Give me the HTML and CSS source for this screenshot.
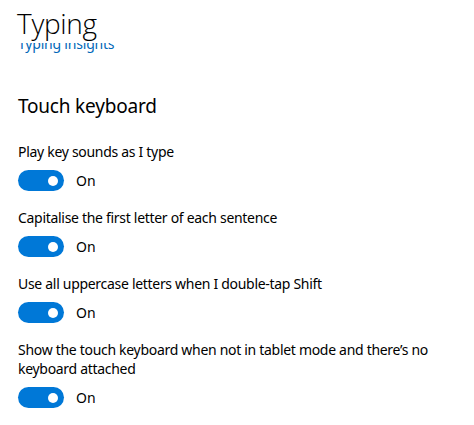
FILE: index.html
```html
<!DOCTYPE html>
<html lang="en">
<head>
<meta charset="utf-8">
<title>Typing</title>
<link rel="stylesheet" href="styles.css">
</head>
<body>
<header class="page-header">
  <h1 class="page-title">Typing</h1>
</header>
<main class="scroller">
  <a class="link" href="#">Typing insights</a>
  <h2 class="section-title">Touch keyboard</h2>
  <div class="setting">
    <div class="label">Play key sounds as I type</div>
    <div class="toggle-row"><span class="toggle"><span class="knob"></span></span><span class="state">On</span></div>
  </div>
  <div class="setting">
    <div class="label">Capitalise the first letter of each sentence</div>
    <div class="toggle-row"><span class="toggle"><span class="knob"></span></span><span class="state">On</span></div>
  </div>
  <div class="setting">
    <div class="label">Use all uppercase letters when I double-tap Shift</div>
    <div class="toggle-row"><span class="toggle"><span class="knob"></span></span><span class="state">On</span></div>
  </div>
  <div class="setting">
    <div class="label">Show the touch keyboard when not in tablet mode and there’s no keyboard attached</div>
    <div class="toggle-row"><span class="toggle"><span class="knob"></span></span><span class="state">On</span></div>
  </div>
</main>
</body>
</html>
```

FILE: styles.css
```css
html, body {
  margin: 0;
  padding: 0;
  background: #ffffff;
}
body {
  width: 474px;
  height: 425px;
  overflow: hidden;
  font-family: "Noto Sans", "Open Sans", sans-serif;
  color: #000000;
}
.page-header {
  height: 43px;
  padding-left: 17px;
  box-sizing: border-box;
}
.page-title {
  margin: 0;
  padding-top: 5px;
  font-family: "Open Sans", "Noto Sans", sans-serif;
  font-size: 28px;
  line-height: 36px;
  font-weight: 300;
  letter-spacing: -0.3px;
}
.scroller {
  height: 382px;
  overflow: hidden;
  padding-left: 18px;
  padding-right: 18px;
  display: flex;
  flex-direction: column;
  align-items: flex-start;
}
.link {
  margin-top: -9px;
  font-size: 14px;
  line-height: 20px;
  letter-spacing: -0.2px;
  color: #0067b8;
  text-decoration: none;
}
.section-title {
  margin: 38px 0 0 0;
  font-size: 19px;
  line-height: 28px;
  font-weight: 400;
  letter-spacing: -0.2px;
}
.setting {
  display: flex;
  flex-direction: column;
  align-items: flex-start;
  margin-top: 22px;
}
.setting + .setting {
  margin-top: 17px;
}
.label {
  font-size: 14px;
  line-height: 19px;
  letter-spacing: -0.3px;
  max-width: 430px;
}
.toggle-row {
  display: flex;
  align-items: center;
  gap: 12px;
  margin-top: 9px;
  height: 21px;
}
.toggle {
  width: 46px;
  height: 21px;
  border-radius: 11px;
  background: #0078d7;
  display: flex;
  align-items: center;
  justify-content: flex-end;
  padding-right: 6px;
  box-sizing: border-box;
}
.knob {
  width: 10px;
  height: 10px;
  border-radius: 50%;
  background: #ffffff;
}
.state {
  font-size: 14px;
  line-height: 19px;
}
```
